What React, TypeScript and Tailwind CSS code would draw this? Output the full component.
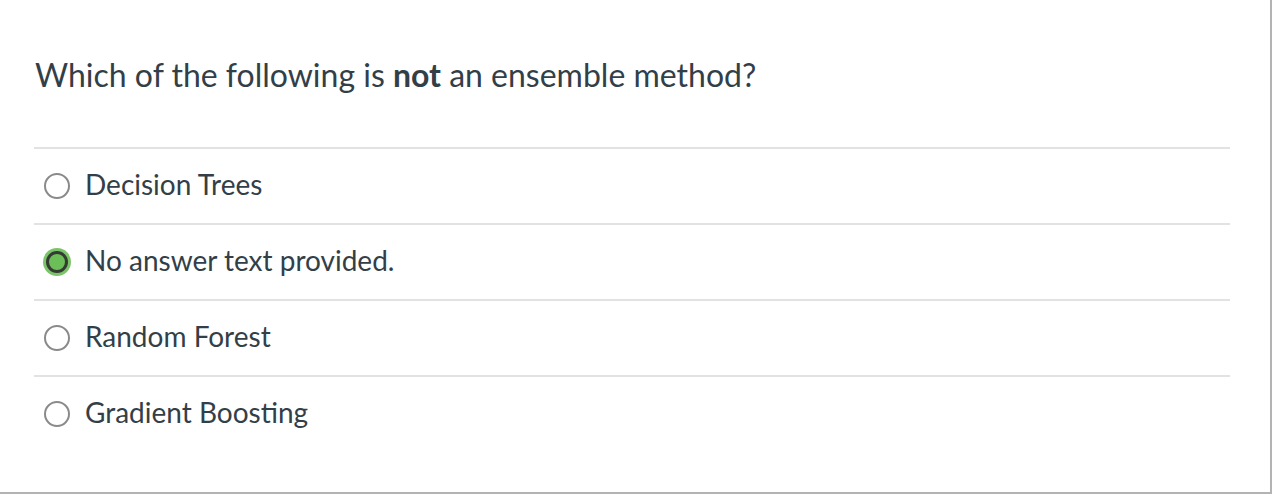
import React from "react";

const answers = [
  { id: "a1", label: "Decision Trees", selected: false },
  { id: "a2", label: "No answer text provided.", selected: true },
  { id: "a3", label: "Random Forest", selected: false },
  { id: "a4", label: "Gradient Boosting", selected: false },
];

function Radio({ selected }: { selected: boolean }) {
  if (selected) {
    return (
      <span className="flex items-center justify-center w-[28px] h-[28px] rounded-full bg-[#7cc46a]">
        <span className="w-[22px] h-[22px] rounded-full border-[3px] border-[#333b33] bg-[#6cbf58]" />
      </span>
    );
  }
  return (
    <span className="flex items-center justify-center w-[28px] h-[28px]">
      <span className="w-[26px] h-[26px] rounded-full border-2 border-[#8a8a8a] bg-white" />
    </span>
  );
}

export default function App() {
  return (
    <div className="w-[1272px] h-[494px] bg-white border-r-2 border-b-2 border-[#b3b3b3] font-['Lato','Noto_Sans',sans-serif] text-[#333f48]">
      <div className="pl-[34px] pr-[40px]">
        <div className="h-[147px] flex items-center pl-[1px] pt-[3px]">
          <h1 className="text-[32px] leading-none">
            Which of the following is <strong className="font-bold">not</strong> an ensemble method?
          </h1>
        </div>
        {answers.map((a) => (
          <div key={a.id} className="border-t-2 border-[#e2e2e2] h-[76px] flex items-center gap-[14px] pl-[9px]">
            <Radio selected={a.selected} />
            <span className="text-[28px] leading-none mb-[4px]">{a.label}</span>
          </div>
        ))}
      </div>
    </div>
  );
}
